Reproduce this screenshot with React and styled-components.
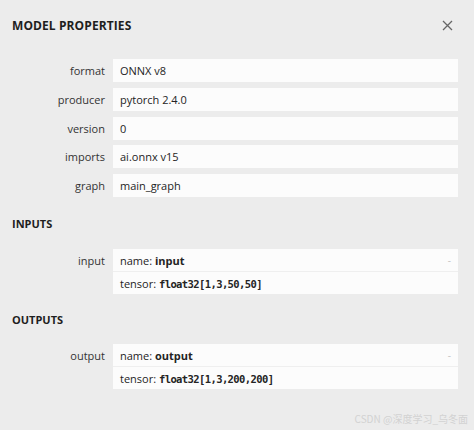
import React from "react";
import styled, { createGlobalStyle } from "styled-components";

const GlobalStyle = createGlobalStyle`
  html, body {
    margin: 0;
    padding: 0;
    background: #ececec;
  }
`;

const Dialog = styled.div`
  width: 474px;
  height: 430px;
  box-sizing: border-box;
  background: #ececec;
  font-family: "Open Sans", "Noto Sans", sans-serif;
  font-size: 11px;
  color: #242424;
  position: relative;
  overflow: hidden;
`;

const Header = styled.div`
  display: flex;
  align-items: center;
  justify-content: space-between;
  height: 50px;
  padding: 0 20px 0 12px;
`;

const Title = styled.h1`
  margin: 0;
  font-size: 12px;
  font-weight: 700;
  letter-spacing: 0.1px;
  color: #1e1e1e;
`;

const CloseButton = styled.button`
  border: none;
  background: none;
  padding: 0;
  width: 14px;
  height: 14px;
  display: flex;
  align-items: center;
  justify-content: center;
  cursor: pointer;
`;

const Body = styled.div`
  padding: ${(p) => p.$top || 0}px 16px 0 0;
`;

const List = styled.div`
  display: flex;
  flex-direction: column;
  gap: 5.75px;
`;

const Row = styled.div`
  display: grid;
  grid-template-columns: 105px 1fr;
  column-gap: 8px;
  align-items: start;
`;

const Label = styled.div`
  text-align: right;
  height: 23px;
  line-height: 23px;
  color: #333;
`;

const Value = styled.div`
  background: #fcfcfc;
  height: 23px;
  line-height: 23px;
  padding: 0 7px;
`;

const SectionTitle = styled.h2`
  margin: 0;
  padding: 0 12px;
  font-size: 11px;
  font-weight: 700;
  color: #1e1e1e;
  height: ${(p) => p.$h}px;
  display: flex;
  align-items: center;
`;

const ArgBox = styled.div`
  background: #fcfcfc;
  display: flex;
  flex-direction: column;
`;

const ArgLine = styled.div`
  display: flex;
  align-items: center;
  justify-content: space-between;
  height: 22px;
  padding: 0 7px;
  & + & {
    border-top: 1px solid #efefef;
  }
`;

const Bold = styled.b`
  font-weight: 700;
`;

const Mono = styled.span`
  font-family: "DejaVu Sans Mono", "Liberation Mono", monospace;
  font-weight: 700;
  font-size: 10.5px;
  letter-spacing: -0.6px;
`;

const Toggle = styled.span`
  color: #c4c4c4;
  font-size: 10px;
`;

const Watermark = styled.div`
  position: absolute;
  right: 6px;
  bottom: 4px;
  font-family: "Noto Sans CJK SC", sans-serif;
  font-size: 10px;
  color: #d2d2d2;
`;

const props = [
  ["format", "ONNX v8"],
  ["producer", "pytorch 2.4.0"],
  ["version", "0"],
  ["imports", "ai.onnx v15"],
  ["graph", "main_graph"],
];

const Argument = ({ label, name, type }) => (
  <Row>
    <Label>{label}</Label>
    <ArgBox>
      <ArgLine>
        <span>
          name: <Bold>{name}</Bold>
        </span>
        <Toggle>-</Toggle>
      </ArgLine>
      <ArgLine>
        <span>
          tensor: <Mono>{type}</Mono>
        </span>
      </ArgLine>
    </ArgBox>
  </Row>
);

export default function App() {
  return (
    <>
      <GlobalStyle />
      <Dialog>
        <Header>
          <Title>MODEL PROPERTIES</Title>
          <CloseButton aria-label="close">
            <svg width="11" height="11" viewBox="0 0 11 11">
              <path d="M1 1L10 10M10 1L1 10" stroke="#666" strokeWidth="1.3" />
            </svg>
          </CloseButton>
        </Header>
        <Body $top={9}>
          <List>
            {props.map(([k, v]) => (
              <Row key={k}>
                <Label>{k}</Label>
                <Value>{v}</Value>
              </Row>
            ))}
          </List>
        </Body>
        <SectionTitle $h={52}>INPUTS</SectionTitle>
        <Body>
          <Argument label="input" name="input" type="float32[1,3,50,50]" />
        </Body>
        <SectionTitle $h={50}>OUTPUTS</SectionTitle>
        <Body>
          <Argument label="output" name="output" type="float32[1,3,200,200]" />
        </Body>
        <Watermark>CSDN @深度学习_乌冬面</Watermark>
      </Dialog>
    </>
  );
}
